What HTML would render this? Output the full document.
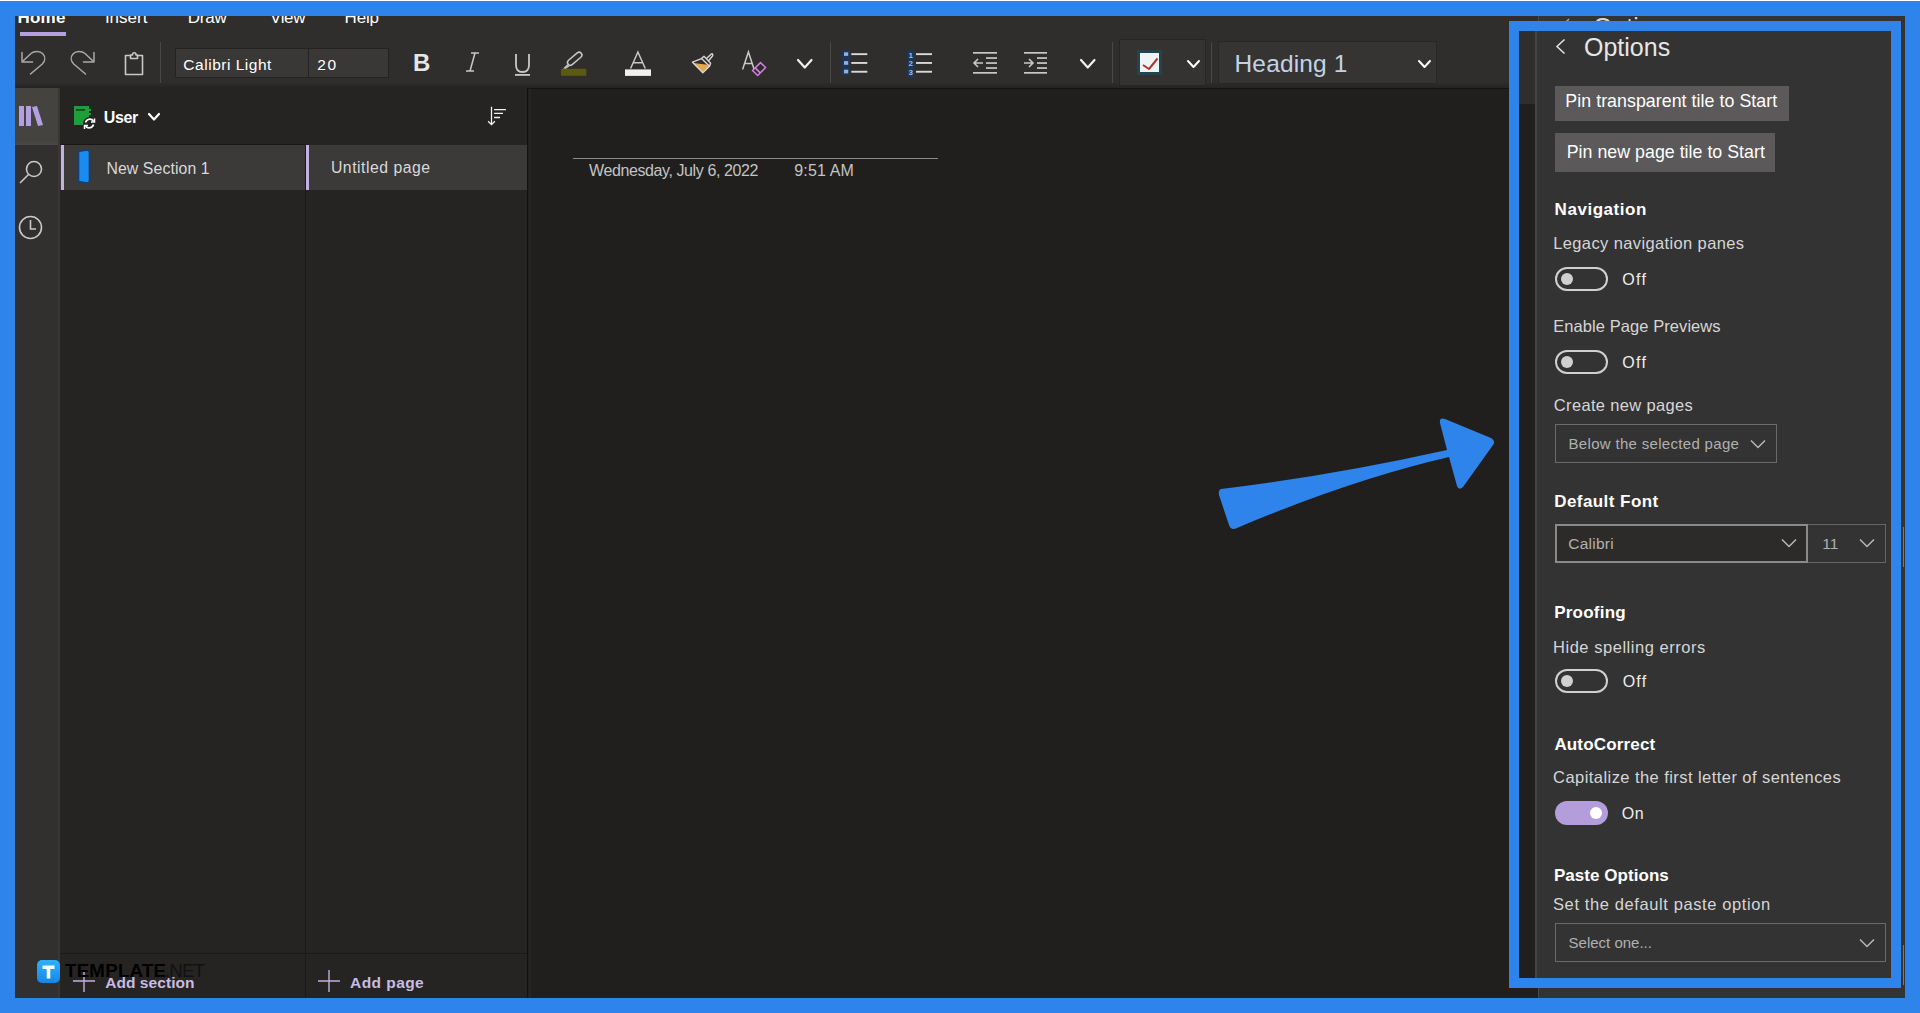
<!DOCTYPE html>
<html><head><meta charset='utf-8'><style>
*{margin:0;padding:0;box-sizing:border-box}
html,body{width:1920px;height:1013px;overflow:hidden}
body{position:relative;background:#2e84ea;font-family:"Liberation Sans", sans-serif}
.a{position:absolute}
.t{white-space:nowrap}
svg{overflow:visible}
</style></head><body>
<div class="a" style="left:0px;top:0px;width:1920px;height:1px;background:#ffffff;"></div>
<div class="a" style="left:15px;top:16px;width:1890px;height:982px;background:#201f1e;"></div>
<div class="a" style="left:15px;top:16px;width:1523px;height:72px;background:#302e2d;"></div>
<div class="a" style="left:15px;top:82px;width:1523px;height:6px;background:linear-gradient(#302e2d,#252423);"></div>
<div class="a" style="left:15px;top:88px;width:1523px;height:1px;background:#151413;"></div>
<div class="a" style="left:15px;top:16px;width:420px;height:20px;overflow:hidden">
<div class="a t" style="left:2.48px;top:-6.990px;font-size:17px;line-height:17px;color:#ffffff;font-weight:700;letter-spacing:0.236px;">Home</div>
<div class="a t" style="left:89.88px;top:-6.990px;font-size:17px;line-height:17px;color:#ffffff;letter-spacing:0.024px;">Insert</div>
<div class="a t" style="left:172.78px;top:-6.990px;font-size:17px;line-height:17px;color:#ffffff;letter-spacing:-0.244px;">Draw</div>
<div class="a t" style="left:254.98px;top:-6.990px;font-size:17px;line-height:17px;color:#ffffff;letter-spacing:-0.334px;">View</div>
<div class="a t" style="left:329.58px;top:-6.990px;font-size:17px;line-height:17px;color:#ffffff;letter-spacing:-0.175px;">Help</div>
</div>
<div class="a" style="left:20px;top:32px;width:46px;height:4px;background:#b4a0e0;"></div>
<svg class="a" style="left:15px;top:40px;" width="160" height="50" viewBox="0 0 160 50">
<g fill="none" stroke="#a9a9a9" stroke-width="1.5" stroke-linecap="round" stroke-linejoin="round">
<path d="M7 12.5 V22 H17.5"/>
<path d="M8 21 L16 13.5 C19 10.8 25 10.8 27.8 13.8 C30.5 16.8 30.3 21 27.3 24 L15.5 34"/>
<g transform="translate(86,0) scale(-1,1)"><path d="M7 12.5 V22 H17.5"/>
<path d="M8 21 L16 13.5 C19 10.8 25 10.8 27.8 13.8 C30.5 16.8 30.3 21 27.3 24 L15.5 34"/></g>
</g>
<g fill="none" stroke="#c8c8c8" stroke-width="1.6" stroke-linejoin="round">
<path d="M115.5 15.5 H110.5 V34.5 H127.5 V15.5 H122.5"/>
<path d="M115.5 18.5 V15 H117.5 C117.5 12 121 12 121 15 H122.5 V18.5 Z"/>
</g></svg>
<div class="a" style="left:160px;top:42px;width:1px;height:41px;background:#4a4847;"></div>
<div class="a" style="left:175px;top:48px;width:214px;height:30px;background:#3a3837;border:1px solid #242322;"></div>
<div class="a" style="left:308px;top:48px;width:1px;height:30px;background:#242322;"></div>
<div class="a t" style="left:183.37px;top:56.760px;font-size:15.5px;line-height:15.5px;color:#ffffff;letter-spacing:0.518px;">Calibri Light</div>
<div class="a t" style="left:317.27px;top:56.760px;font-size:15.5px;line-height:15.5px;color:#ffffff;letter-spacing:1.519px;">20</div>
<div class="a t" style="left:413px;top:50.510px;font-size:24px;line-height:24px;color:#e6e6e6;font-weight:700;">B</div>
<svg class="a" style="left:460px;top:48px;" width="26" height="28" viewBox="0 0 26 28"><path d="M11 5 H19 M6 23 H14 M15 5 L10 23" fill="none" stroke="#c8c8c8" stroke-width="1.5"/></svg>
<svg class="a" style="left:510px;top:50px;" width="30" height="30" viewBox="0 0 30 30"><g fill="none" stroke="#c8c8c8" stroke-width="1.8">
<path d="M6 4 V15 C6 20 9 22 12.5 22 C16 22 19 20 19 15 V4"/></g>
<rect x="5" y="24" width="15" height="1.8" fill="#c8c8c8"/></svg>
<svg class="a" style="left:555px;top:45px;" width="36" height="35" viewBox="0 0 36 35"><g transform="translate(19.7,13.75) rotate(-40)"><rect x="-8.5" y="-2.8" width="17" height="5.6" rx="2.8" fill="none" stroke="#c8c8c8" stroke-width="1.5"/></g>
<path d="M8 23.5 L12.5 19 L14.5 21.5 L10.5 24 Z" fill="#bdbdbd"/>
<rect x="6" y="23.8" width="25.3" height="7" fill="#5a5a12"/></svg>
<svg class="a" style="left:620px;top:45px;" width="36" height="35" viewBox="0 0 36 35"><g fill="none" stroke="#c8c8c8" stroke-width="1.5">
<path d="M10.6 23.5 L17.9 7 L25.3 23.5 M13.2 17.8 H22.6"/></g>
<rect x="5" y="24.4" width="26" height="6.5" fill="#f0f0f0"/></svg>
<svg class="a" style="left:685px;top:45px;" width="36" height="35" viewBox="0 0 36 35">
<path d="M8.2 17.9 L17.8 27.6 L24 21.4 L22.3 19.8 L12.5 18.6 Z" fill="#e4a84e"/>
<g fill="none" stroke="#d8d8d8" stroke-width="1.4" stroke-linejoin="round">
<path d="M7.5 17.2 L17.8 27.7 L24.5 21.2 L16.5 13.6 Z"/>
<path d="M16.5 13.6 L19 11.2 L25.6 18.3 L24.5 21.2"/>
<path d="M21.5 13.5 L26.3 9 C27.3 8 28.3 10 27.5 11 L23.6 15.8"/></g></svg>
<svg class="a" style="left:740px;top:45px;" width="36" height="35" viewBox="0 0 36 35"><g fill="none" stroke="#c8c8c8" stroke-width="1.5">
<path d="M2.6 24.5 L8.4 7 L14.2 24.5 M4.6 18.6 H12.4"/></g>
<path d="M12.5 25.5 L20.5 17.6 L25.6 22.5 L17.7 30.5 Z" fill="#2e2c2b" stroke="#d27fe0" stroke-width="1.5" stroke-linejoin="round"/>
<path d="M15.2 22.9 L20.2 27.9" stroke="#d27fe0" stroke-width="1.6"/></svg>
<svg class="a" style="left:795.75px;top:57.95px;" width="17.5" height="11.5" viewBox="0 0 17.5 11.5"><path d="M2 2 L8.75 9.5 L15.5 2" fill="none" stroke="#f0f0f0" stroke-width="2.2" stroke-linecap="round" stroke-linejoin="round"/></svg>
<div class="a" style="left:830px;top:42px;width:1px;height:41px;background:#4a4847;"></div>
<svg class="a" style="left:838px;top:45px;" width="32" height="35" viewBox="0 0 32 35"><rect x="4" y="5" width="8" height="25" fill="#1d3657"/>
<g fill="#8fb1e0"><rect x="6" y="7.3" width="4.2" height="3.6"/><rect x="6" y="16.1" width="4.2" height="3.7"/><rect x="6" y="24.7" width="4.2" height="3.7"/></g>
<g fill="#d8d8d8"><rect x="13.3" y="8.2" width="16" height="1.9"/><rect x="13.3" y="17" width="16" height="1.9"/><rect x="13.3" y="25.8" width="16" height="1.9"/></g></svg>
<svg class="a" style="left:903px;top:45px;" width="32" height="35" viewBox="0 0 32 35"><rect x="4.5" y="5" width="7" height="28" fill="#1d3657"/>
<g fill="#9dbde6" font-family="Liberation Sans" font-size="8" font-weight="700"><text x="5.4" y="12.5">1</text><text x="5.4" y="21.3">2</text><text x="5.4" y="30">3</text></g>
<g fill="#d8d8d8"><rect x="13" y="8.2" width="16" height="1.9"/><rect x="13" y="17" width="16" height="1.9"/><rect x="13" y="25.8" width="16" height="1.9"/></g></svg>
<svg class="a" style="left:970px;top:48px;" width="32" height="30" viewBox="0 0 32 30"><g fill="#c8c8c8"><rect x="3" y="4" width="24" height="1.7"/><rect x="16" y="9.2" width="11" height="1.7"/><rect x="16" y="14.2" width="11" height="1.7"/><rect x="3" y="24" width="24" height="1.7"/><rect x="16" y="19.2" width="11" height="1.7"/></g>
<g fill="none" stroke="#c8c8c8" stroke-width="1.6"><path d="M4 15 H13 M8 11 L4 15 L8 19"/></g></svg>
<svg class="a" style="left:1020px;top:48px;" width="32" height="30" viewBox="0 0 32 30"><g fill="#c8c8c8"><rect x="4" y="4" width="23" height="1.7"/><rect x="17" y="9.2" width="10" height="1.7"/><rect x="17" y="14.2" width="10" height="1.7"/><rect x="4" y="24" width="23" height="1.7"/><rect x="17" y="19.2" width="10" height="1.7"/></g>
<g fill="none" stroke="#c8c8c8" stroke-width="1.6"><path d="M4 15 H13 M9 11 L13 15 L9 19"/></g></svg>
<svg class="a" style="left:1078.55px;top:57.95px;" width="17.5" height="11.5" viewBox="0 0 17.5 11.5"><path d="M2 2 L8.75 9.5 L15.5 2" fill="none" stroke="#f0f0f0" stroke-width="2.2" stroke-linecap="round" stroke-linejoin="round"/></svg>
<div class="a" style="left:1112px;top:42px;width:1px;height:41px;background:#4a4847;"></div>
<div class="a" style="left:1119px;top:39px;width:87px;height:47px;background:#353332;border:1px solid #262524;"></div>
<div class="a" style="left:1137px;top:50px;width:25px;height:25px;background:#1f4550;"></div>
<div class="a" style="left:1140px;top:53px;width:19px;height:19px;background:#eef3f3;"></div>
<svg class="a" style="left:1137px;top:50px;" width="25" height="25" viewBox="0 0 25 25"><path d="M6 15 L12 19 L20.5 8.5" fill="none" stroke="#b03434" stroke-width="2" stroke-linejoin="round"/></svg>
<svg class="a" style="left:1185.5px;top:59.0px;" width="15" height="10" viewBox="0 0 15 10"><path d="M2 2 L7.5 8 L13 2" fill="none" stroke="#ffffff" stroke-width="2" stroke-linecap="round" stroke-linejoin="round"/></svg>
<div class="a" style="left:1211px;top:42px;width:1px;height:41px;background:#4a4847;"></div>
<div class="a" style="left:1218px;top:41px;width:219px;height:43px;background:#363433;border:1px solid #282726;"></div>
<div class="a t" style="left:1234.53px;top:52.260px;font-size:24.5px;line-height:24.5px;color:#c3d3e4;letter-spacing:0.155px;">Heading 1</div>
<svg class="a" style="left:1416.5px;top:58.5px;" width="15" height="10" viewBox="0 0 15 10"><path d="M2 2 L7.5 8 L13 2" fill="none" stroke="#ffffff" stroke-width="2" stroke-linecap="round" stroke-linejoin="round"/></svg>
<div class="a" style="left:15px;top:88px;width:45px;height:910px;background:#32302e;"></div>
<div class="a" style="left:15px;top:88px;width:45px;height:57px;background:#45433f;"></div>
<div class="a" style="left:15px;top:140px;width:43px;height:5px;background:linear-gradient(#45433f,#4a4845);"></div>
<div class="a" style="left:58px;top:88px;width:2px;height:910px;background:#393735;"></div>
<svg class="a" style="left:15px;top:100px;" width="45" height="32" viewBox="0 0 45 32"><g fill="#b4a0e0"><rect x="4" y="6" width="5" height="20"/><rect x="11" y="6" width="5" height="20"/><path d="M17 7 L22 6 L28 25 L23 26 Z"/></g></svg>
<svg class="a" style="left:15px;top:155px;" width="45" height="35" viewBox="0 0 45 35"><g fill="none" stroke="#c8c8c8" stroke-width="1.6"><circle cx="19" cy="14" r="7.5"/><path d="M13.5 19.5 L5 28"/></g></svg>
<svg class="a" style="left:15px;top:212px;" width="45" height="32" viewBox="0 0 45 32"><g fill="none" stroke="#c8c8c8" stroke-width="1.6"><circle cx="15.5" cy="15.5" r="11"/><path d="M15.5 8 V17 H21"/></g></svg>
<div class="a" style="left:60px;top:88px;width:245px;height:910px;background:#252423;"></div>
<div class="a" style="left:60px;top:145px;width:245px;height:45px;background:#3b3a39;"></div>
<div class="a" style="left:61px;top:145px;width:3px;height:45px;background:#c2b2e2;"></div>
<div class="a" style="left:60px;top:144px;width:467px;height:1px;background:#1a1918;"></div>
<svg class="a" style="left:70px;top:100px;" width="34" height="34" viewBox="0 0 34 34"><rect x="4" y="6" width="15" height="19" fill="#1f9e3c"/><rect x="6" y="9" width="9" height="1.8" fill="#0d4a1b"/>
<rect x="19" y="9" width="2" height="2" fill="#1f9e3c"/><rect x="19" y="13" width="2" height="2" fill="#1f9e3c"/>
<circle cx="19.5" cy="23.5" r="6.5" fill="#252423"/>
<g fill="none" stroke="#ffffff" stroke-width="1.7"><path d="M15.5 22.5 A4.5 4.5 0 0 1 23.5 21"/><path d="M23.5 24.5 A4.5 4.5 0 0 1 15.5 26"/></g>
<path d="M24.5 18.5 V22 H21" fill="none" stroke="#fff" stroke-width="1.5"/><path d="M14.5 29 V25.5 H18" fill="none" stroke="#fff" stroke-width="1.5"/></svg>
<div class="a t" style="left:103.64px;top:109.510px;font-size:16px;line-height:16px;color:#ffffff;font-weight:700;letter-spacing:-0.287px;">User</div>
<svg class="a" style="left:147.2px;top:112.25px;" width="14" height="9.5" viewBox="0 0 14 9.5"><path d="M2 2 L7.0 7.5 L12 2" fill="none" stroke="#ffffff" stroke-width="2.2" stroke-linecap="round" stroke-linejoin="round"/></svg>
<svg class="a" style="left:75px;top:147px;" width="18" height="40" viewBox="0 0 18 40"><path d="M3.5 4.5 L12 3 C14 3 14.5 4 14.5 5.5 V33 C14.5 35 14 36 12 36 L3.5 34.5 Z" fill="#1a8cf0" stroke="#173f73" stroke-width="1.6"/></svg>
<div class="a t" style="left:106.45px;top:160.610px;font-size:15.8px;line-height:15.8px;color:#d8d8d8;letter-spacing:0.11px;">New Section 1</div>
<div class="a" style="left:60px;top:953px;width:245px;height:1px;background:#1b1a19;"></div>
<div class="a" style="left:305px;top:88px;width:222px;height:910px;background:#252423;"></div>
<div class="a" style="left:305px;top:145px;width:1px;height:853px;background:#1c1b1a;"></div>
<div class="a" style="left:306px;top:145px;width:221px;height:45px;background:#3b3a39;"></div>
<div class="a" style="left:306px;top:145px;width:3px;height:45px;background:#c2b2e2;"></div>
<div class="a t" style="left:330.95px;top:159.610px;font-size:15.8px;line-height:15.8px;color:#d8d8d8;letter-spacing:0.499px;">Untitled page</div>
<div class="a" style="left:306px;top:953px;width:221px;height:1px;background:#1b1a19;"></div>
<div class="a" style="left:527px;top:89px;width:1px;height:909px;background:#121211;"></div>
<div class="a" style="left:529px;top:89px;width:2px;height:909px;background:#262524;"></div>
<svg class="a" style="left:484px;top:104px;" width="26" height="26" viewBox="0 0 26 26"><g fill="none" stroke="#f2f2f2" stroke-width="1.3"><path d="M7.5 2.8 V20.6 M4.1 17.2 L7.5 20.6 L10.9 17.2"/><path d="M10.1 5.6 H21.9 M10.1 9.4 H19 M10.1 13.5 H16"/></g></svg>
<svg class="a" style="left:70px;top:968px;" width="30" height="26" viewBox="0 0 30 26"><g stroke="#c0b0e0" stroke-width="1.4"><path d="M14 2 V24 M3 13 H25"/></g></svg>
<div class="a t" style="left:105.17px;top:974.760px;font-size:15.5px;line-height:15.5px;color:#c8bce0;font-weight:700;letter-spacing:0.066px;">Add section</div>
<svg class="a" style="left:315px;top:968px;" width="30" height="26" viewBox="0 0 30 26"><g stroke="#c0b0e0" stroke-width="1.4"><path d="M14 2 V24 M3 13 H25"/></g></svg>
<div class="a t" style="left:350.07px;top:974.760px;font-size:15.5px;line-height:15.5px;color:#c8bce0;font-weight:700;letter-spacing:0.435px;">Add page</div>
<div class="a" style="left:573px;top:158px;width:365px;height:1px;background:#8a8a8a;"></div>
<div class="a t" style="left:589.04px;top:162.510px;font-size:16px;line-height:16px;color:#c4c4c4;letter-spacing:-0.403px;">Wednesday, July 6, 2022</div>
<div class="a t" style="left:794.24px;top:162.510px;font-size:16px;line-height:16px;color:#c4c4c4;letter-spacing:0.152px;">9:51 AM</div>
<div class="a" style="left:1538px;top:16px;width:367px;height:982px;background:#333333;"></div>
<div class="a" style="left:1538px;top:16px;width:1px;height:982px;background:#4a4847;"></div>
<div class="a" style="left:1903px;top:527px;width:1px;height:40px;background:#7a7a7a;"></div>
<div class="a" style="left:1903px;top:945px;width:1px;height:40px;background:#7a7a7a;"></div>
<div class="a" style="left:1538px;top:16px;width:367px;height:5px;overflow:hidden">
<div class="a t" style="left:55px;top:-1.490px;font-size:25px;line-height:25px;color:#d8d8d8;">Options</div>
<svg class="a" style="left:26px;top:0px" width="14" height="10"><path d="M1 7 L5 3" stroke="#aaa" stroke-width="1.4"/></svg>
</div>
<div class="a" style="left:1519px;top:31px;width:372px;height:947px;background:#201f1e;"></div>
<div class="a" style="left:1519px;top:31px;width:16px;height:73px;background:#302e2d;"></div>
<div class="a" style="left:1535px;top:31px;width:356px;height:947px;background:#333333;"></div>
<div class="a" style="left:1535px;top:31px;width:2px;height:947px;background:#454545;"></div>
<div class="a" style="left:1509px;top:21px;width:392px;height:967px;border:10px solid #2e84ea;"></div>
<svg class="a" style="left:1550px;top:36px;" width="20" height="22" viewBox="0 0 20 22"><path d="M14.5 3.5 L7 10.5 L14.5 17.5" fill="none" stroke="#e0e0e0" stroke-width="1.6"/></svg>
<div class="a t" style="left:1584px;top:34.510px;font-size:25px;line-height:25px;color:#e6e6e6;">Options</div>
<div class="a" style="left:1555px;top:86px;width:234px;height:35px;background:#5b5959;"></div>
<div class="a t" style="left:1565.33px;top:93.110px;font-size:17.8px;line-height:17.8px;color:#ffffff;letter-spacing:0.046px;">Pin transparent tile to Start</div>
<div class="a" style="left:1555px;top:133px;width:220px;height:39px;background:#5b5959;"></div>
<div class="a t" style="left:1566.73px;top:144.110px;font-size:17.8px;line-height:17.8px;color:#ffffff;letter-spacing:0.018px;">Pin new page tile to Start</div>
<div class="a t" style="left:1554.58px;top:201.010px;font-size:17px;line-height:17px;color:#ffffff;font-weight:700;letter-spacing:0.538px;">Navigation</div>
<div class="a t" style="left:1553.21px;top:234.760px;font-size:16.5px;line-height:16.5px;color:#d6d6d6;letter-spacing:0.378px;">Legacy navigation panes</div>
<div class="a" style="left:1555px;top:267px;width:53px;height:24px;border:2.5px solid #d0d0d0;border-radius:12px;"></div>
<div class="a" style="left:1561px;top:273px;width:12px;height:12px;background:#d0d0d0;border-radius:50%;"></div>
<div class="a t" style="left:1622.34px;top:271.510px;font-size:16px;line-height:16px;color:#eeeeee;letter-spacing:1.286px;">Off</div>
<div class="a t" style="left:1553.31px;top:317.760px;font-size:16.5px;line-height:16.5px;color:#d6d6d6;letter-spacing:0.067px;">Enable Page Previews</div>
<div class="a" style="left:1555px;top:350px;width:53px;height:24px;border:2.5px solid #d0d0d0;border-radius:12px;"></div>
<div class="a" style="left:1561px;top:356px;width:12px;height:12px;background:#d0d0d0;border-radius:50%;"></div>
<div class="a t" style="left:1622.34px;top:354.510px;font-size:16px;line-height:16px;color:#eeeeee;letter-spacing:1.286px;">Off</div>
<div class="a t" style="left:1553.81px;top:396.760px;font-size:16.5px;line-height:16.5px;color:#d6d6d6;letter-spacing:0.344px;">Create new pages</div>
<div class="a" style="left:1555px;top:424px;width:222px;height:39px;border:1.5px solid #6a6a6a;"></div>
<div class="a t" style="left:1568.5px;top:436.010px;font-size:15px;line-height:15px;color:#b0b0b0;letter-spacing:0.316px;">Below the selected page</div>
<svg class="a" style="left:1750px;top:439px;" width="16" height="10" viewBox="0 0 16 10"><path d="M1 1.5 L8 8.5 L15 1.5" fill="none" stroke="#b8b8b8" stroke-width="1.5"/></svg>
<div class="a t" style="left:1554.18px;top:493.010px;font-size:17px;line-height:17px;color:#ffffff;font-weight:700;letter-spacing:0.444px;">Default Font</div>
<div class="a" style="left:1555px;top:524px;width:253px;height:39px;background:#2d2b2a;border:2px solid #8a8a8a;"></div>
<div class="a t" style="left:1568.37px;top:535.760px;font-size:15.5px;line-height:15.5px;color:#b0b0b0;letter-spacing:0.222px;">Calibri</div>
<svg class="a" style="left:1781px;top:538px;" width="16" height="10" viewBox="0 0 16 10"><path d="M1 1.5 L8 8.5 L15 1.5" fill="none" stroke="#b8b8b8" stroke-width="1.5"/></svg>
<div class="a" style="left:1808px;top:524px;width:78px;height:39px;border:1px solid #666;border-left:none;"></div>
<div class="a t" style="left:1822.37px;top:535.760px;font-size:15.5px;line-height:15.5px;color:#b0b0b0;letter-spacing:-0.131px;">11</div>
<svg class="a" style="left:1859px;top:538px;" width="16" height="10" viewBox="0 0 16 10"><path d="M1 1.5 L8 8.5 L15 1.5" fill="none" stroke="#b8b8b8" stroke-width="1.5"/></svg>
<div class="a t" style="left:1554.18px;top:604.010px;font-size:17px;line-height:17px;color:#ffffff;font-weight:700;letter-spacing:0.237px;">Proofing</div>
<div class="a t" style="left:1553.01px;top:638.760px;font-size:16.5px;line-height:16.5px;color:#d6d6d6;letter-spacing:0.533px;">Hide spelling errors</div>
<div class="a" style="left:1555px;top:669px;width:53px;height:24px;border:2.5px solid #d0d0d0;border-radius:12px;"></div>
<div class="a" style="left:1561px;top:675px;width:12px;height:12px;background:#d0d0d0;border-radius:50%;"></div>
<div class="a t" style="left:1622.64px;top:673.510px;font-size:16px;line-height:16px;color:#eeeeee;letter-spacing:1.286px;">Off</div>
<div class="a t" style="left:1554.38px;top:736.010px;font-size:17px;line-height:17px;color:#ffffff;font-weight:700;letter-spacing:0.167px;">AutoCorrect</div>
<div class="a t" style="left:1553.11px;top:768.760px;font-size:16.5px;line-height:16.5px;color:#d6d6d6;letter-spacing:0.437px;">Capitalize the first letter of sentences</div>
<div class="a" style="left:1555px;top:801px;width:53px;height:24px;background:#b39ddb;border-radius:12px;"></div>
<div class="a" style="left:1590px;top:807px;width:12px;height:12px;background:#ffffff;border-radius:50%;"></div>
<div class="a t" style="left:1621.64px;top:805.510px;font-size:16px;line-height:16px;color:#eeeeee;letter-spacing:0.575px;">On</div>
<div class="a t" style="left:1553.98px;top:867.010px;font-size:17px;line-height:17px;color:#ffffff;font-weight:700;letter-spacing:0.045px;">Paste Options</div>
<div class="a t" style="left:1553.01px;top:895.760px;font-size:16.5px;line-height:16.5px;color:#d6d6d6;letter-spacing:0.603px;">Set the default paste option</div>
<div class="a" style="left:1555px;top:923px;width:331px;height:39px;border:1.5px solid #6a6a6a;"></div>
<div class="a t" style="left:1568.6px;top:935.010px;font-size:15px;line-height:15px;color:#b0b0b0;letter-spacing:-0.007px;">Select one...</div>
<svg class="a" style="left:1859px;top:938px;" width="16" height="10" viewBox="0 0 16 10"><path d="M1 1.5 L8 8.5 L15 1.5" fill="none" stroke="#b8b8b8" stroke-width="1.5"/></svg>
<svg class="a" style="left:1210px;top:410px;" width="300" height="130" viewBox="0 0 300 130"><path d="M11 79 Q 120 66 237 40 L230 13 Q 229 7 235 9 L281 28 Q 286 31 283 35 L253 77 Q 249 81 247 76 L239 47 Q 140 70 27 118 Q 21 121 19 115 L9 85 Q 8 80 11 79 Z" fill="#2e84ea"/></svg>
<svg class="a" style="left:36px;top:959px;" width="26" height="26" viewBox="0 0 26 26"><defs><linearGradient id="tg" x1="0" y1="0" x2="0" y2="1"><stop offset="0" stop-color="#2fb0ff"/><stop offset="1" stop-color="#1587e8"/></linearGradient></defs><rect x="1" y="1" width="23" height="23" rx="5" fill="url(#tg)"/><path d="M6.5 6.5 H18.5 V10 H14.3 V19.5 H10.7 V10 H6.5 Z" fill="#fff"/></svg>
<div class="a t" style="left:64.98px;top:962.160px;font-size:18.7px;line-height:18.7px;color:#000000;font-weight:700;letter-spacing:0.252px;">TEMPLATE</div>
<div class="a t" style="left:164.88px;top:962.160px;font-size:18.7px;line-height:18.7px;color:#111111;letter-spacing:-0.818px;">.NET</div>
</body></html>
